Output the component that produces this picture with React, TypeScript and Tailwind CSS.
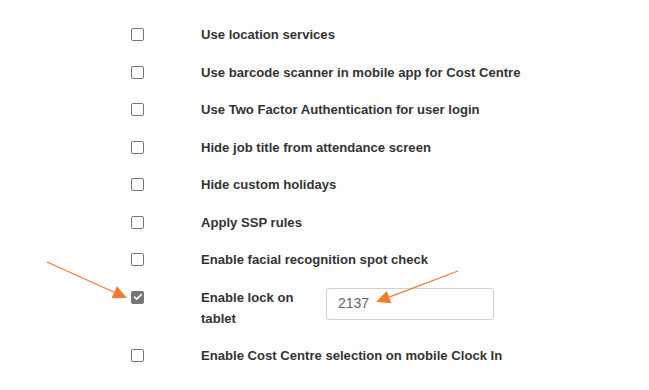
import { Check } from "lucide-react";

type Setting = {
  label: string;
  checked?: boolean;
  value?: string;
};

const settings: Setting[] = [
  { label: "Use location services" },
  { label: "Use barcode scanner in mobile app for Cost Centre" },
  { label: "Use Two Factor Authentication for user login" },
  { label: "Hide job title from attendance screen" },
  { label: "Hide custom holidays" },
  { label: "Apply SSP rules" },
  { label: "Enable facial recognition spot check" },
  { label: "Enable lock on tablet", checked: true, value: "2137" },
  { label: "Enable Cost Centre selection on mobile Clock In" },
];

function Checkbox({ checked }: { checked?: boolean }) {
  if (checked) {
    return (
      <span className="mt-[4px] flex h-[13px] w-[13px] shrink-0 items-center justify-center rounded-[2px] bg-[#767676]">
        <Check size={10} strokeWidth={4} className="text-white" />
      </span>
    );
  }
  return (
    <span className="mt-[4px] h-[13px] w-[13px] shrink-0 rounded-[2px] border border-[#767676] bg-white" />
  );
}

function Arrow({ x1, y1, x2, y2 }: { x1: number; y1: number; x2: number; y2: number }) {
  const angle = Math.atan2(y2 - y1, x2 - x1);
  const len = 14;
  const half = 6.5;
  const bx = x2 - len * Math.cos(angle);
  const by = y2 - len * Math.sin(angle);
  const px = -Math.sin(angle) * half;
  const py = Math.cos(angle) * half;
  return (
    <g>
      <line x1={x1} y1={y1} x2={bx} y2={by} stroke="#ee7d2f" strokeWidth={1.3} />
      <polygon
        points={`${x2},${y2} ${bx + px},${by + py} ${bx - px},${by - py}`}
        fill="#ee7d2f"
      />
    </g>
  );
}

export default function App() {
  return (
    <div className="relative h-[390px] w-[649px] overflow-hidden bg-white font-['Liberation_Sans',Arial,sans-serif] text-[13.1px] font-bold text-[#333]">
      <div className="flex flex-col pl-[131px] pt-[16px]">
        {settings.map((s) => (
          <div key={s.label} className="flex items-start py-[8.25px] leading-[21px]">
            <Checkbox checked={s.checked} />
            {s.value ? (
              <>
                <span className="ml-[57px] w-[110px]">{s.label}</span>
                <div className="ml-[15px] mt-[1px] flex h-[32px] w-[168px] items-center rounded-[3px] border border-[#d0d0d0] px-[11px] text-[14px] font-normal text-[#666]">
                  {s.value}
                </div>
              </>
            ) : (
              <span className="ml-[57px]">{s.label}</span>
            )}
          </div>
        ))}
      </div>
      <svg className="pointer-events-none absolute left-0 top-0" width={649} height={390}>
        <Arrow x1={47} y1={262} x2={127} y2={298} />
        <Arrow x1={458} y1={271} x2={376} y2={302} />
      </svg>
    </div>
  );
}
